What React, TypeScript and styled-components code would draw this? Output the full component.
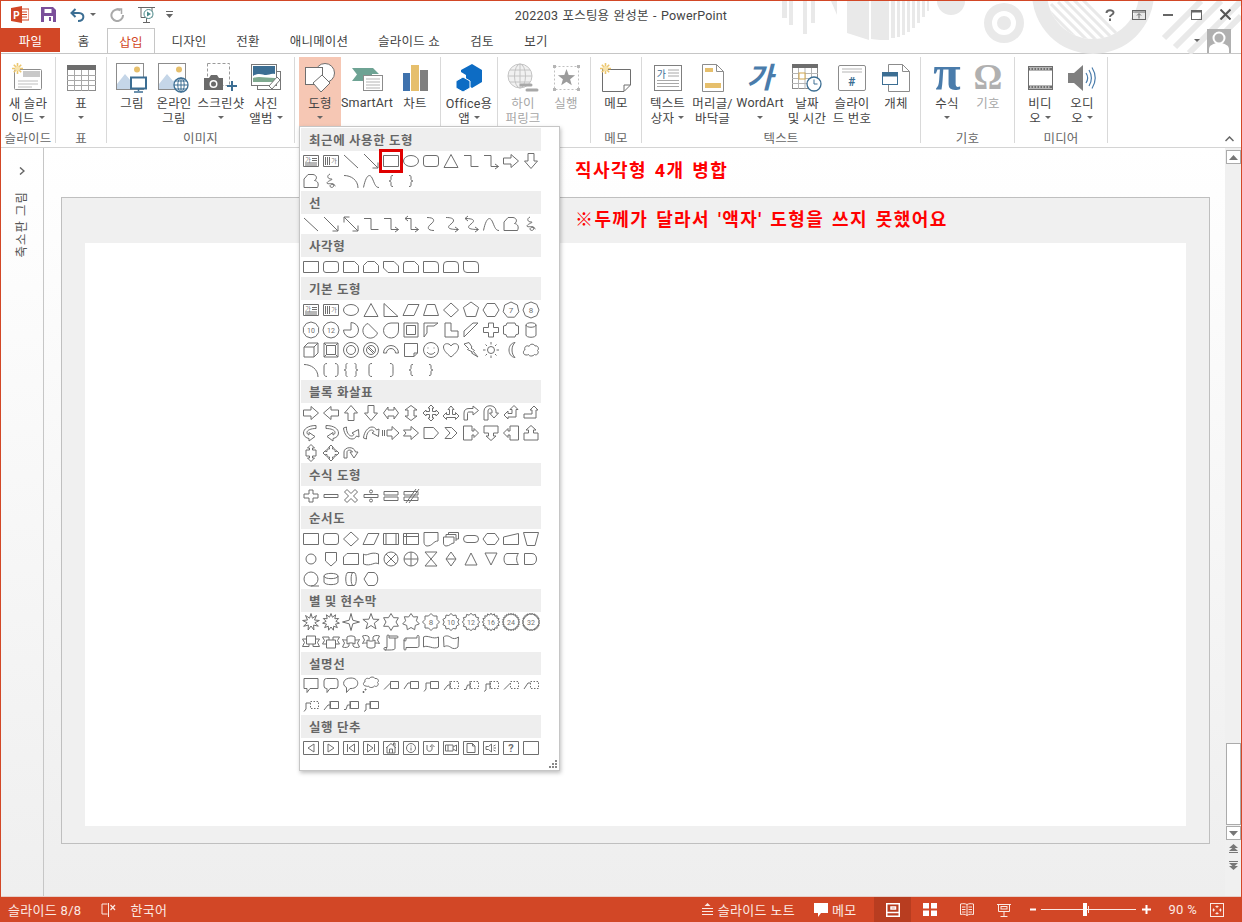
import React from "react";
import styled, {createGlobalStyle} from "styled-components";

const ACCENT = "#d24726";
const STROKE = "#6e6e6e";
const FONT = `Roboto, "Noto Sans CJK KR", sans-serif`;

const GlobalStyle = createGlobalStyle`
  html, body {
    margin: 0;
    padding: 0;
    background: #fff;
  }
  * {
    box-sizing: border-box;
  }
`

const Window = styled.div`
  position: relative;
  width: 1242px;
  height: 922px;
  display: flex;
  flex-direction: column;
  overflow: hidden;
  border: 1px solid ${ACCENT};
  border-bottom: 0;
  background: #fff;
  font-family: ${FONT};
  font-size: 12.5px;
  letter-spacing: 0.2px;
  color: #444;
`

const Header = styled.header`
  position: relative;
  height: 53px;
  flex: none;
  display: flex;
  flex-direction: column;
  border-bottom: 1px solid #c6c6c6;
`

const HeaderArt = styled.svg`
  position: absolute;
  right: 0;
  top: 0;
`

const TitleBar = styled.div`
  position: relative;
  height: 28px;
  display: grid;
  grid-template-columns: 1fr auto 1fr;
  align-items: center;
`

const QuickAccess = styled.div`
  display: flex;
  align-items: center;
  padding-left: 10px;
  gap: 5px;
`

const QuickSlot = styled.span<{$w: number; $gap?: number}>`
  width: ${p => p.$w}px;
  margin-left: ${p => p.$gap ?? 0}px;
  display: flex;
  justify-content: center;
`

const Title = styled.div`
  color: #444;
  word-spacing: 1px;
`

const WindowButtons = styled.div`
  display: flex;
  justify-content: flex-end;
  align-items: center;
  padding-right: 1px;
`

const WindowButton = styled.span`
  width: 29px;
  height: 20px;
  display: flex;
  align-items: center;
  justify-content: center;
`

const TabRow = styled.nav`
  position: relative;
  height: 25px;
  display: flex;
`

const Tab = styled.div<{$active?: boolean; $file?: boolean; $w: number}>`
  width: ${p => p.$w}px;
  height: ${p => (p.$active ? 25 : 24)}px;
  display: flex;
  align-items: center;
  justify-content: center;
  white-space: nowrap;
  color: ${p => (p.$file ? "#fff" : p.$active ? ACCENT : "#444")};
  background: ${p => (p.$file ? ACCENT : p.$active ? "#fff" : "transparent")};
  border: ${p => (p.$active ? "1px solid #c6c6c6" : "0")};
  border-bottom: 0;
  z-index: 1;
`

const Account = styled.div`
  margin-left: auto;
  display: flex;
  align-items: center;
  gap: 7px;
  padding-right: 10px;
`

const Ribbon = styled.section`
  height: 94px;
  flex: none;
  display: flex;
  align-items: flex-start;
  padding-top: 3px;
  border-bottom: 1px solid #d4d4d4;
  position: relative;
`

const Group = styled.div<{$w: number; $pad?: number}>`
  width: ${p => p.$w}px;
  height: 86px;
  flex: none;
  padding-left: ${p => p.$pad ?? 0}px;
  border-right: 1px solid #d9d9d9;
  display: flex;
  flex-direction: column;
`

const GroupButtons = styled.div`
  height: 69px;
  display: flex;
`

const GroupLabel = styled.div<{$pad?: number}>`
  margin-top: 5px;
  margin-left: ${p => -(p.$pad ?? 0)}px;
  line-height: 16px;
  text-align: center;
  color: #666;
  white-space: nowrap;
`

const ToolButton = styled.div<{$w: number; $active?: boolean; $off?: boolean}>`
  width: ${p => p.$w}px;
  height: 69px;
  flex: none;
  display: flex;
  flex-direction: column;
  align-items: center;
  padding-top: 3px;
  background: ${p => (p.$active ? "#f6c7b4" : "transparent")};
  color: ${p => (p.$off ? "#a6a6a6" : "#444")};
`

const ToolIcon = styled.div`
  height: 35px;
  display: flex;
  align-items: center;
  justify-content: center;
`

const GlyphIcon = styled.span<{$size: number; $color: string; $serif?: boolean; $lift: number}>`
  display: block;
  height: 32px;
  line-height: 32px;
  font-family: ${p => (p.$serif ? `"Liberation Serif", serif` : FONT)};
  font-size: ${p => p.$size}px;
  font-weight: 700;
  font-style: ${p => (p.$serif ? "normal" : "italic")};
  color: ${p => p.$color};
  transform: translateY(${p => -p.$lift}px);
`

const ToolLabel = styled.div`
  text-align: center;
  white-space: nowrap;
`

const LabelLine = styled.div`
  height: 15px;
  display: flex;
  align-items: center;
  justify-content: center;
  gap: 4px;
`

const Caret = styled.span<{$color?: string}>`
  display: inline-block;
  width: 0;
  height: 0;
  border-left: 3px solid transparent;
  border-right: 3px solid transparent;
  border-top: 3px solid ${p => p.$color ?? "#666"};
`

const Collapse = styled.svg`
  position: absolute;
  right: 7px;
  bottom: 5px;
`

const Body = styled.main`
  flex: 1;
  min-height: 0;
  display: flex;
  border-bottom: 1px solid #e6cfc9;
`

const ThumbRail = styled.aside`
  width: 43px;
  flex: none;
  display: flex;
  flex-direction: column;
  align-items: center;
  padding-top: 19px;
  gap: 16px;
  border-right: 1px solid #c6c6c6;
  background: linear-gradient(#fff, #efefef);
  color: #555;
`

const RailText = styled.div`
  writing-mode: vertical-rl;
  text-orientation: sideways;
  transform: rotate(180deg);
  letter-spacing: 1px;
  line-height: 14px;
`

const Canvas = styled.div`
  position: relative;
  flex: 1;
  padding: 49px 15px 0 17px;
  background: linear-gradient(#fff, #eee);
`

const Slide = styled.div`
  width: 1149px;
  height: 647px;
  padding: 45px 23px 17px;
  background: #f0f0f0;
  border: 1px solid #bfbfbf;
`

const SlideInner = styled.div`
  width: 100%;
  height: 100%;
  background: #fff;
`

const Annotation = styled.div<{$top: number}>`
  position: absolute;
  left: 531px;
  top: ${p => p.$top}px;
  color: #f00;
  font-weight: 700;
  font-size: 18px;
  line-height: 22px;
  letter-spacing: 1.4px;
  word-spacing: 2px;
  white-space: pre;
`

const ScrollBar = styled.div`
  width: 16px;
  flex: none;
  display: flex;
  flex-direction: column;
  align-items: center;
  padding-top: 2px;
  background: #f0f0f0;
`

const ScrollEnd = styled.div`
  width: 15px;
  height: 14px;
  flex: none;
  display: flex;
  align-items: center;
  justify-content: center;
  background: #fff;
  border: 1px solid #ababab;
`

const ScrollTrack = styled.div`
  flex: none;
  width: 15px;
  height: 579px;
`

const ScrollThumb = styled.div`
  flex: none;
  width: 15px;
  height: 82px;
  background: #fff;
  border: 1px solid #ababab;
  margin-bottom: 1px;
`

const PageJump = styled.svg<{$top: number}>`
  margin-top: ${p => p.$top}px;
  flex: none;
`

const StatusBar = styled.footer`
  height: 25px;
  flex: none;
  margin: 0 -1px;
  padding: 0 18px 0 8px;
  display: flex;
  align-items: center;
  background: ${ACCENT};
  color: #fbe9e3;
  font-size: 13px;
  letter-spacing: 0.3px;
`

const StatusText = styled.span<{$gap?: number}>`
  margin-left: ${p => p.$gap ?? 0}px;
  white-space: nowrap;
`

const StatusIcon = styled.svg<{$gap?: number}>`
  margin-left: ${p => p.$gap ?? 0}px;
  flex: none;
`

const StatusRight = styled.div`
  margin-left: auto;
  display: flex;
  align-items: center;
  height: 100%;
`

const ViewButton = styled.span<{$active?: boolean}>`
  width: 37px;
  height: 100%;
  display: flex;
  align-items: center;
  justify-content: center;
  background: ${p => (p.$active ? "#b83d20" : "transparent")};
`

const ViewGroup = styled.div`
  height: 100%;
  margin-left: 18px;
  display: flex;
`

const ZoomSlider = styled.div`
  position: relative;
  width: 95px;
  height: 1px;
  margin: 0 4px;
  background: #fbe9e3;
`

const ZoomThumb = styled.span`
  position: absolute;
  left: 42px;
  top: -6px;
  width: 4px;
  height: 13px;
  background: #fff;
`

const ZoomTick = styled.span`
  position: absolute;
  left: 47px;
  top: -3px;
  width: 1px;
  height: 7px;
  background: #fbe9e3;
`

const ZoomMinus = styled.svg`
  margin-left: 8px;
  flex: none;
`

const ZoomPlus = styled.svg`
  margin-left: 2px;
  flex: none;
`

const ShapeMenu = styled.div`
  position: absolute;
  left: 298px;
  top: 125px;
  z-index: 5;
  width: 261px;
  height: 645px;
  padding: 1px 0 0 1px;
  background: #fff;
  border: 1px solid #c6c6c6;
  box-shadow: 1px 2px 4px rgba(0, 0, 0, 0.25);
`

const MenuHeading = styled.div`
  width: 240px;
  height: 23px;
  padding-left: 8px;
  display: flex;
  align-items: center;
  background: #eeeeee;
  color: #666;
  font-weight: 700;
  letter-spacing: 0.6px;
`

const ShapeGrid = styled.div`
  display: grid;
  width: 240px;
  grid-template-columns: repeat(12, 20px);
  grid-auto-rows: 20px;
`

const ShapeCell = styled.span<{$selected?: boolean}>`
  width: 20px;
  height: 20px;
  display: block;
  outline: ${p => (p.$selected ? "3px solid #e00000" : "0")};
  outline-offset: -1px;
  z-index: ${p => (p.$selected ? 1 : 0)};
`

const ResizeGrip = styled.svg`
  position: absolute;
  right: 2px;
  bottom: 2px;
`

/* --- shape gallery --- */

interface ShapeDef {
  d: string
  dash?: string
  t?: string
  x?: number
  y?: number
  s?: number
}

function ring(n: number, R: number, r: number, cx = 10, cy = 10) {
  const pts: string[] = [];
  for (let i = 0; i < n * 2; i++) {
    const a = (Math.PI * i) / n - Math.PI / 2;
    const q = i % 2 ? r : R;
    pts.push(`${(cx + q * Math.cos(a)).toFixed(1)} ${(cy + q * Math.sin(a)).toFixed(1)}`);
  }
  return "M" + pts.join("L") + "Z";
}

function polygon(n: number, R: number, cx = 10, cy = 10) {
  const pts: string[] = [];
  for (let i = 0; i < n; i++) {
    const a = (2 * Math.PI * i) / n - Math.PI / 2;
    pts.push(`${(cx + R * Math.cos(a)).toFixed(1)} ${(cy + R * Math.sin(a)).toFixed(1)}`);
  }
  return "M" + pts.join("L") + "Z";
}

const circle = (cx: number, cy: number, r: number, ry = r) =>
  `M${cx - r} ${cy}a${r} ${ry} 0 1 0 ${r * 2} 0a${r} ${ry} 0 1 0 ${-r * 2} 0Z`;

const BOX = "M2.5 4.5H17.5V15.5H2.5Z";
const ACTION = "M2.5 3.5H17.5V16.5H2.5Z";
const head = "M17.5 15.5L14 13M17.5 15.5L14 18";
const tail = "M4 4.5L7 2M4 4.5L7 7";
const CUTBOX = "M9.5 6.5H17.5V13.5H9.5Z";

const SHAPES: Record<string, ShapeDef> = {
  textH: {d: BOX + "M11 7.5H16M11 9.5H16M4 12H16M4 14H16", t: "가", x: 7, y: 10.5, s: 6},
  textV: {d: BOX + "M4.5 6V14M6.5 6V14M8.5 6V14", t: "가", x: 13, y: 12, s: 6},
  line: {d: "M3 4L17 17"},
  arrow: {d: "M3 3L17 17M17 17V11.5M17 17H11.5"},
  dbl: {d: "M3 3L17 17M3 3H8.5M3 3V8.5M17 17V11.5M17 17H11.5"},
  rect: {d: BOX},
  oval: {d: circle(10, 10, 7.5, 5.5)},
  round: {d: "M5 4.5H15Q17.5 4.5 17.5 7V13Q17.5 15.5 15 15.5H5Q2.5 15.5 2.5 13V7Q2.5 4.5 5 4.5Z"},
  tri: {d: "M10 3.5L17 16.5H3Z"},
  elbow: {d: "M3 4.5H10V15.5H17.5"},
  elbowA: {d: "M3 4.5H10V15.5H17.5" + head},
  elbowD: {d: "M4 4.5H10V15.5H17.5" + head + tail},
  curveC: {d: "M6 3.5C14 3.5 14 7 10 10C6 13 6 16.5 13 16.5"},
  curveA: {d: "M5 3.5C14 3.5 14 7 10 10C6 13 6 15.5 17 15.5" + head},
  curveD: {d: "M4 4.5C14 4.5 14 7 10 10C6 13 6 15.5 17 15.5" + head + tail},
  curve: {d: "M2.5 16.5C5 4 9 1 12 9C14 14 15 16.5 18 16.5"},
  free: {d: "M3 16.5V8L7 3.5H12C16 4 16.5 8 13.5 9.5C17 10 18 13 16.5 16.5Z"},
  scrib: {d: "M9 3C5 5 7 8 10 8C14 8 6 10 6 12C6 14 13 11 13 14C13 17 9 17 9 15C9 13 13 13 14.5 15"},
  arc: {d: "M3 4.5C10 4.5 17 9 17 17"},
  lbrace: {d: "M12 4.5C9.5 4.5 10 5.500 10 7V8.500C10 9.500 9 10 8 10C9 10 10 10.500 10 11.500V13C10 14.500 9.500 15.500 12 15.500"},
  rbrace: {d: "M8 4.5C10.500 4.5 10 5.500 10 7V8.500C10 9.500 11 10 12 10C11 10 10 10.500 10 11.500V13C10 14.500 10.500 15.500 8 15.500"},
  right: {d: "M2.5 7H10V3.5L17.5 10L10 16.5V13H2.5Z"},
  left: {d: "M17.5 7H10V3.5L2.5 10L10 16.5V13H17.5Z"},
  up: {d: "M7 17.5V10H3.5L10 2.5L16.5 10H13V17.5Z"},
  down: {d: "M7 2.5V10H3.5L10 17.5L16.5 10H13V2.5Z"},
  snip1: {d: "M2.5 4.5H13.5L17.5 8.5V15.5H2.5Z"},
  snip2: {d: "M6.5 4.5H13.5L17.5 8.5V15.5H2.5V8.5Z"},
  snipd: {d: "M2.5 4.5H13L17.5 9V15.5H7L2.5 11Z"},
  snipr: {d: "M5 4.5H13.5L17.5 8.5V15.5H2.5V7Q2.5 4.5 5 4.5Z"},
  round1: {d: "M2.5 4.5H14Q17.5 4.5 17.5 8V15.5H2.5Z"},
  round2: {d: "M6 4.5H14Q17.5 4.5 17.5 8V15.5H2.5V8Q2.5 4.5 6 4.5Z"},
  round3: {d: "M2.5 4.5H14Q17.5 4.5 17.5 8V15.5H6Q2.5 15.5 2.5 12Z"},
  rtri: {d: "M3 3.5L17 16.5H3Z"},
  para: {d: "M7 4.5H18L13 15.5H2Z"},
  trap: {d: "M6 4.5H14L17.5 15.5H2.5Z"},
  diamond: {d: "M10 3L17.5 10L10 17L2.5 10Z"},
  penta: {d: polygon(5, 8)},
  hexa: {d: "M6 3.5H14L18 10L14 16.5H6L2 10Z"},
  hept: {d: polygon(7, 8), t: "7", s: 8, y: 13},
  octa: {d: polygon(8, 8), t: "8", s: 8, y: 13},
  deca: {d: polygon(10, 8), t: "10", s: 7, y: 12.5},
  dodeca: {d: polygon(12, 8), t: "12", s: 7, y: 12.5},
  pie: {d: "M10 10V2.5A7.5 7.5 0 1 1 2.5 10Z"},
  chord: {d: "M7 3.5A7.5 7.5 0 1 0 16.5 13Z"},
  tear: {d: "M10 3H17.5V10A7.5 7.5 0 1 1 10 3Z"},
  frame: {d: "M3 3H17V17H3ZM5.5 5.5H14.5V14.5H5.5Z"},
  half: {d: "M3 3H17L13 6H6V13L3 17Z"},
  ell: {d: "M4 3H10V11H17V17H4Z"},
  stripe: {d: "M3 11L12 3H17L3 17Z"},
  cross: {d: "M7.5 3H12.5V7.5H17.5V12.5H12.5V17H7.5V12.5H2.5V7.5H7.5Z"},
  plaque: {d: "M6 3H14Q14 6 17.5 6V14Q14 14 14 17H6Q6 14 2.5 14V6Q6 6 6 3Z"},
  can: {d: "M5 5C5 2 15 2 15 5V15C15 18 5 18 5 15ZM5 5C5 8 15 8 15 5"},
  cube: {d: "M3 7H13V17H3ZM3 7L7 3H17V13L13 17M13 7L17 3"},
  bevel: {d: "M3 3H17V17H3ZM5.5 5.5H14.5V14.5H5.5ZM3 3L5.5 5.5M17 3L14.5 5.5M3 17L5.5 14.5M17 17L14.5 14.5"},
  donut: {d: circle(10, 10, 7.5) + circle(10, 10, 4.5)},
  noSym: {d: circle(10, 10, 7.5) + circle(10, 10, 4.5) + "M6.5 7.5L12.5 13.5M7.5 6.5L13.5 12.5"},
  blockArc: {d: "M2.5 13A7.5 7.5 0 0 1 17.5 13H14.5A4.5 4.5 0 0 0 5.5 13Z"},
  fold: {d: "M3.5 3.5H16.5V13L13 16.5H3.5ZM16.5 13H13V16.5"},
  smile: {d: circle(10, 10, 7.5) + "M7 7.5V8.5M13 7.5V8.5M6 12C8 15 12 15 14 12"},
  heart: {d: "M10 17C5 13 2.5 10 2.5 7C2.5 3 8 2.5 10 6C12 2.5 17.5 3 17.5 7C17.5 10 15 13 10 17Z"},
  bolt: {d: "M3 4L8 2.5L11 7L10 8L13.5 10.5L12.5 11.5L17 17L10.5 13L11.5 12L6.5 9.5L7.5 8.5Z"},
  sun: {d: circle(10, 10, 3.5) + "M10 2V4.5M10 15.5V18M2 10H4.5M15.5 10H18M4.5 4.5L6 6M14 14L15.5 15.5M4.5 15.5L6 14M14 6L15.5 4.5"},
  moon: {d: "M14 2.5C6 3.5 6 16.5 14 17.5C10 14 10 6 14 2.5Z"},
  cloud: {d: "M5 15C1.5 15 2 10 4 10C2.5 6 7 5 8 6.5C9 3.5 13 3.5 14 6C17 5 18.5 9 16.5 10.5C18.5 12.5 16 16 13.5 14.5C12 16.5 8 16.5 7.5 14.5C7 15 6 15 5 15Z"},
  brack2: {d: "M6 3.5C3.5 3.5 3 5 3 7V13C3 15 3.5 16.5 6 16.5M14 3.5C16.5 3.5 17 5 17 7V13C17 15 16.5 16.5 14 16.5"},
  brace2: {d: "M6.500 3.500C4.500 3.500 5 5 5 7V8.500C5 9.500 4 10 3 10C4 10 5 10.500 5 11.500V13C5 15 4.500 16.500 6.500 16.500M13.500 3.500C15.500 3.500 15 5 15 7V8.500C15 9.500 16 10 17 10C16 10 15 10.500 15 11.500V13C15 15 15.500 16.500 13.500 16.500"},
  lbrack: {d: "M11 3.5C8 3.5 8 5 8 7V13C8 15 8 16.5 11 16.5"},
  rbrack: {d: "M9 3.5C12 3.5 12 5 12 7V13C12 15 12 16.5 9 16.5"},
  lr: {d: "M2.5 10L7 4V7H13V4L17.5 10L13 16V13H7V16Z"},
  ud: {d: "M10 2.5L16 7H13V13H16L10 17.5L4 13H7V7H4Z"},
  quad: {d: "M10 2L13 5H11.5V8.5H15V7L18 10L15 13V11.5H11.5V15H13L10 18L7 15H8.5V11.5H5V13L2 10L5 7V8.5H8.5V5H7Z"},
  lrup: {d: "M10 3L13 6.5H11.5V11.5H14.5V9.5L18 13L14.5 16.5V14.5H5.5V16.5L2 13L5.5 9.5V11.5H8.5V6.5H7Z"},
  bent: {d: "M3 17V10C3 7 5 5.5 8 5.5H12V3L17.5 7.5L12 12V9H8C7 9 6.5 9.5 6.5 10.5V17Z"},
  uturn: {d: "M3 17V8C3 1 15 1 15 8V10H17.5L13 15L8.5 10H11V8C11 5 7 5 7 8V17Z"},
  leftUp: {d: "M3 12L7 8V10.5H11V6.5H9L13 2.5L17 6.5H15V14H7V16Z"},
  bentUp: {d: "M3 11H11V7H9L13 3L17 7H15V15H3Z"},
  cRight: {d: "M15 2.500C7 2.500 2.500 6 2.500 10C2.500 13 5 15 8 15.500V18L14 13.500L8 9.500V12C6.500 11.500 6 10.500 6 9.500C6 7 10 5.500 15 5.500Z"},
  cLeft: {d: "M5 2.500C13 2.500 17.500 6 17.500 10C17.500 13 15 15 12 15.500V18L6 13.500L12 9.500V12C13.500 11.500 14 10.500 14 9.500C14 7 10 5.500 5 5.500Z"},
  cUp: {d: "M2.500 5C3 11 7 16 11 16C13 16 14.500 15 15.500 13L18 14L17.500 6.500L11 10L13 11.500C12.500 12.500 11.500 13 10.500 13C8 13 5 9 5.500 4Z"},
  cDown: {d: "M2.500 15C3 9 7 4 11 4C13 4 14.500 5 15.500 7L18 6L17.500 13.500L11 10L13 8.500C12.500 7.500 11.500 7 10.500 7C8 7 5 11 5.500 16Z"},
  striped: {d: "M1.5 7V13M3.5 7V13M6 7H11V3.5L18 10L11 16.5V13H6Z"},
  notched: {d: "M2.5 7H10V3.5L17.5 10L10 16.5V13H2.5L5 10Z"},
  home: {d: "M3 4.5H12.5L17.5 10L12.5 15.5H3Z"},
  chevron: {d: "M4 4.5H10.5L16 10L10.5 15.5H4L9 10Z"},
  rCall: {d: "M2.5 3H11V8H13V5.5L17.5 10L13 14.5V12H11V17H2.5Z"},
  dCall: {d: "M3 3H17V10H12.5V13H15L10 17.5L5 13H7.5V10H3Z"},
  lCall: {d: "M17.5 3H9V8H7V5.5L2.5 10L7 14.5V12H9V17H17.5Z"},
  uCall: {d: "M3 17H17V10H12.5V7H15L10 2.5L5 7H7.5V10H3Z"},
  udCall: {d: "M10 1.5L13.5 5H11.5V7H15V13H11.5V15H13.5L10 18.5L6.5 15H8.5V13H5V7H8.5V5H6.5Z"},
  qCall: {d: "M10 2L12.5 4.5H11.5V6H14V8.5H15.5V7.5L18 10L15.5 12.5V11.5H14V14H11.5V15.5H12.5L10 18L7.5 15.5H8.5V14H6V11.5H4.5V12.5L2 10L4.5 7.5V8.5H6V6H8.5V4.5H7.5Z"},
  circ: {d: "M3 15V9C3 4 13 2.5 14.5 9H17L13 15L9 9H11.5C10 6 6 7 6 9V15Z"},
  plus: {d: "M8 4H12V8H17V12H12V16H8V12H3V8H8Z"},
  minus: {d: "M3 8.5H17V11.5H3Z"},
  times: {d: "M6 3.5L10 7.5L14 3.5L16.5 6L12.5 10L16.5 14L14 16.5L10 12.5L6 16.5L3.5 14L7.5 10L3.5 6Z"},
  divide: {d: "M3 8.5H17V11.5H3Z" + circle(10, 5.5, 1.5) + circle(10, 14.5, 1.5)},
  equal: {d: "M3 5.5H17V9H3ZM3 11H17V14.5H3Z"},
  notEq: {d: "M3 5.5H17V9H3ZM3 11H17V14.5H3ZM5 17L15 3M8 17L18 3"},
  predef: {d: BOX + "M5 4.5V15.5M15 4.5V15.5"},
  internal: {d: BOX + "M5.5 4.5V15.5M2.5 7.5H17.5"},
  doc: {d: "M3 3.5H17V12C12 12 12 17 6 17C4 17 3 15 3 13Z"},
  multidoc: {d: "M2.5 8H13V14C10 14 9 17 5 17C3 17 2.5 15 2.5 14ZM5 8V5.5H15V12M7.5 5.5V3.5H17.5V10H15"},
  termin: {d: "M6 6.5H14A3.5 3.5 0 0 1 14 13.5H6A3.5 3.5 0 0 1 6 6.5Z"},
  prep: {d: "M6 4.5H14L18 10L14 15.5H6L2 10Z"},
  manIn: {d: "M2.5 8L17.5 4.5V15.5H2.5Z"},
  manOp: {d: "M2.5 3.5H17.5L14 16.5H6Z"},
  conn: {d: circle(10, 10, 5)},
  offp: {d: "M4.5 3.5H15.5V12L10 17L4.5 12Z"},
  card: {d: "M6 4.5H17.5V15.5H2.5V8Z"},
  tape: {d: "M2.5 5C6 8 9 2 17.5 5V15C14 12 10 18 2.5 15Z"},
  sumJ: {d: circle(10, 10, 7) + "M5 5L15 15M15 5L5 15"},
  orJ: {d: circle(10, 10, 7) + "M3 10H17M10 3V17"},
  collate: {d: "M4 3H16L4 17H16Z"},
  sort: {d: "M10 3L15 10L10 17L5 10ZM5 10H15"},
  extract: {d: "M10 4L16 16H4Z"},
  merge: {d: "M4 4H16L10 16Z"},
  stored: {d: "M6 4.5H17.5C15 7 15 13 17.5 15.5H6C2 15 2 5 6 4.5Z"},
  delay: {d: "M3.5 4.5H11C17 4.5 17 15.5 11 15.5H3.5Z"},
  seq: {d: circle(10, 10, 7) + "M10 17H18"},
  disk: {d: "M3 7C3 3.5 17 3.5 17 7V13C17 16.5 3 16.5 3 13ZM3 7C3 10.5 17 10.5 17 7"},
  drum: {d: "M7 3.5H13C16 3.5 16 16.5 13 16.5H7C4 16.5 4 3.5 7 3.5ZM12 3.5C9.5 3.5 9.5 16.5 12 16.5"},
  display: {d: "M7 3.5H13C18 5 18 15 13 16.5H7L3 10Z"},
  boom1: {d: ring(9, 8.5, 4)},
  boom2: {d: ring(11, 8.5, 5)},
  star4: {d: ring(4, 8.5, 2.5)},
  star5: {d: ring(5, 8.5, 3.5)},
  star6: {d: ring(6, 8.5, 5)},
  star7: {d: ring(7, 8.5, 5.5)},
  star8: {d: ring(8, 8.5, 6.5), t: "8", s: 8, y: 13},
  star10: {d: ring(10, 8.5, 6.8), t: "10", s: 7, y: 12.5},
  star12: {d: ring(12, 8.8, 7), t: "12", s: 7, y: 12.5},
  star16: {d: ring(16, 8.8, 7), t: "16", s: 7, y: 12.5},
  star24: {d: ring(24, 8.8, 7.2), t: "24", s: 7, y: 12.5},
  star32: {d: ring(32, 8.8, 7.4), t: "32", s: 7, y: 12.5},
  ribUp: {d: "M5.5 4H14.5V12H5.5ZM5.5 7H1.5L3.5 10.5L1.5 14.5H8V12M14.5 7H18.5L16.5 10.5L18.5 14.5H12V12"},
  ribDn: {d: "M5.5 8H14.5V16H5.5ZM5.5 12H1.5L3.5 8.5L1.5 5H8V8M14.5 12H18.5L16.5 8.5L18.5 5H12V8"},
  cRibUp: {d: "M6 5C8 3.5 12 3.5 14 5V12C12 10.5 8 10.5 6 12ZM6 8C4 8 3 8 1.5 7.5L3.5 11L1.5 15C4 16 7 15.5 8 14V11M14 8C16 8 17 8 18.5 7.5L16.5 11L18.5 15C16 16 13 15.5 12 14V11"},
  cRibDn: {d: "M6 8C8 9.5 12 9.5 14 8V15C12 16.5 8 16.5 6 15ZM6 11C4 11 3 11 1.5 11.5L3.5 8L1.5 4C4 3 7 3.5 8 5V8.5M14 11C16 11 17 11 18.5 11.5L16.5 8L18.5 4C16 3 13 3.5 12 5V8.5"},
  vScroll: {d: "M6 4C6 2.5 8 2.5 8 4H16C17.5 4 17.5 6 16 6H14V16C14 18 12 18 4 18C2.5 18 2.5 15.5 4 15.5H6ZM4 15.5C6 15.5 6 18 4 18M8 4V6H14"},
  hScroll: {d: "M3 8C3 6 5 6 5 6H16V4.5C16 3 18 3 18 4.5V14C18 15.5 16 15.5 16 15.5H5V17C5 18.5 3 18.5 3 17ZM3 8C3 9.5 5 9.5 5 8V6"},
  wave: {d: "M2.5 5C7 2.5 12 8 17.5 5V15C12 18 7 12.5 2.5 15Z"},
  wave2: {d: "M2.5 5C5 3 8 4 10 5.5C12 7 15 7 17.5 5L17 15C15 17 12 17 10 15.5C8 14 5 13 3 15Z"},
  cRect: {d: "M3 3.5H17V13.5H9L6 17.5V13.5H3Z"},
  cRound: {d: "M5.5 3.5H14.5Q17 3.5 17 6V11Q17 13.5 14.5 13.5H9L6 17.5V13.5H5.5Q3 13.5 3 11V6Q3 3.5 5.5 3.5Z"},
  cOval: {d: "M10 3C19 3 19 13.5 10 13.5H9L5.5 17.5V12.5C0.5 10 2 3 10 3Z"},
  cCloud: {d: "M5 11C1.5 11 2 7 4 7C3 3.5 7 2.5 8 4C9 1.5 13 1.5 14 3.5C17 3 18.5 6 16.5 7.5C18.5 9.5 16 12.5 13.5 11C12 13 8 13 7.5 11C7 11.5 6 11.5 5 11ZM4 14H5V15H4ZM2 16.5H3V17.5H2Z"},
  l1: {d: CUTBOX + "M9.5 8L3 14.5"},
  l2: {d: CUTBOX + "M9.5 8H7L3 14"},
  l3: {d: CUTBOX + "M9.5 8H5V14L3 16.5"},
  a1: {d: "M9 6V14M9 10H7L3 15", dash: CUTBOX},
  a2: {d: "M9 6V14M9 10H6.5L5 14.5H3", dash: CUTBOX},
  a3: {d: "M9 6V14M9 9H5V15L3 16.5", dash: CUTBOX},
  n1: {d: "M9.5 8L3 14.5", dash: CUTBOX},
  n2: {d: "M9.5 8H7L3 14", dash: CUTBOX},
  n3: {d: "M9.5 8H5V14L3 16.5", dash: CUTBOX},
  b1: {d: CUTBOX + "M9 6V14M9 10H7L3 15"},
  b2: {d: CUTBOX + "M9 6V14M9 10H6.5L5 14.5H3"},
  b3: {d: CUTBOX + "M9 6V14M9 9H5V15L3 16.5"},
  aBack: {d: ACTION + "M13 6V14L7 10Z"},
  aFwd: {d: ACTION + "M7 6V14L13 10Z"},
  aBegin: {d: ACTION + "M6.5 6V14M13.5 6V14L8 10Z"},
  aEnd: {d: ACTION + "M13.5 6V14M6.5 6V14L12 10Z"},
  aHome: {d: ACTION + "M5 10L10 5.5L15 10M6 9V15H14V9M8.5 15V11H11.5V15M12.5 7V5H14V8.5"},
  aInfo: {d: ACTION + circle(10, 10, 4.5) + "M10 7.5V8.5M10 9.5V12.5"},
  aRet: {d: ACTION + "M6 7V11C6 14 11 14 11 11V8M9 9L11 6.5L13.5 9"},
  aMovie: {d: ACTION + "M4.5 7H12V13H4.5ZM12 9L15.5 7V13L12 11M7 7V13"},
  aDoc: {d: ACTION + "M6 5.5H11.5L14 8V14.5H6ZM11.5 5.5V8H14"},
  aSound: {d: ACTION + "M5 8.5H7.5L10.5 6V14L7.5 11.5H5ZM12.5 8L14.5 7M12.5 10H15M12.5 12L14.5 13"},
  aHelp: {d: ACTION, t: "?", s: 11, y: 14},
  aBlank: {d: ACTION},
};

const SVG_STROKE = {fill: "none", stroke: STROKE, strokeWidth: 1};

function ShapeIcon(props: {name: string}) {
  const def = SHAPES[props.name];

  return (
    <svg width="20" height="20" viewBox="0 0 20 20" style={{display: "block"}}>
      <path d={def.d} {...SVG_STROKE} />
      {def.dash && <path d={def.dash} {...SVG_STROKE} strokeDasharray="1.500 1.500" />}
      {def.t && (
        <text
          x={def.x ?? 10}
          y={def.y ?? 12.5}
          textAnchor="middle"
          fontSize={def.s ?? 6}
          fontWeight={def.t === "?" ? 700 : 400}
          fontFamily={FONT}
          letterSpacing="0"
          fill={STROKE}
        >
          {def.t}
        </text>
      )}
    </svg>
  )
}

const MENU: {title: string; items: string}[] = [
  {title: "최근에 사용한 도형", items: "textH textV line arrow rect oval round tri elbow elbowA right down free scrib arc curve lbrace rbrace"},
  {title: "선", items: "line arrow dbl elbow elbowA elbowD curveC curveA curveD curve free scrib"},
  {title: "사각형", items: "rect round snip1 snip2 snipd snipr round1 round2 round3"},
  {title: "기본 도형", items: "textH textV oval tri rtri para trap diamond penta hexa hept octa deca dodeca pie chord tear frame half ell stripe cross plaque can cube bevel donut noSym blockArc fold smile heart bolt sun moon cloud arc brack2 brace2 lbrack rbrack lbrace rbrace"},
  {title: "블록 화살표", items: "right left up down lr ud quad lrup bent uturn leftUp bentUp cRight cLeft cUp cDown striped notched home chevron rCall dCall lCall uCall udCall qCall circ"},
  {title: "수식 도형", items: "plus minus times divide equal notEq"},
  {title: "순서도", items: "rect round diamond para predef internal doc multidoc termin prep manIn manOp conn offp card tape sumJ orJ collate sort extract merge stored delay seq disk drum display"},
  {title: "별 및 현수막", items: "boom1 boom2 star4 star5 star6 star7 star8 star10 star12 star16 star24 star32 ribUp ribDn cRibUp cRibDn vScroll hScroll wave wave2"},
  {title: "설명선", items: "cRect cRound cOval cCloud l1 l2 l3 a1 a2 a3 n1 n2 n3 b1 b2 b3"},
  {title: "실행 단추", items: "aBack aFwd aBegin aEnd aHome aInfo aRet aMovie aDoc aSound aHelp aBlank"},
];

/* --- ribbon icons --- */

const Sparkle = (props: {x: number; y: number}) => (
  <g transform={`translate(${props.x} ${props.y})`} stroke="#ecc66e" strokeWidth="1.6">
    <path d="M5.500 0V11M0 5.500H11M1.800 1.800L9.200 9.200M9.200 1.800L1.800 9.200" />
    <circle cx="5.500" cy="5.500" r="2.500" fill="#f7e3ad" stroke="none" />
  </g>
);

const Picture = () => (
  <>
    <rect x=".5" y=".5" width="27" height="26" fill="#fff" stroke="#8c8c8c" />
    <path d="M1 26V21L9 11L15 18L18 16L26 26Z" fill="#c5d6e8" />
    <circle cx="21" cy="6.500" r="3" fill="#e6bf6c" />
  </>
);

const Icons: Record<string, React.ReactNode> = {
  newSlide: (
    <svg width="32" height="30" viewBox="0 0 32 30">
      <rect x="2.500" y="6.500" width="27" height="20" rx="1" fill="#fff" stroke="#8c8c8c" />
      <rect x="11" y="8" width="17" height="6" fill="#c9c9c9" />
      <path d="M6 18H26M6 21H26M6 24H20" stroke="#bdbdbd" />
      <Sparkle x={0} y={0} />
    </svg>
  ),
  table: (
    <svg width="29" height="26" viewBox="0 0 29 26">
      <rect x=".5" y=".5" width="28" height="25" fill="#fff" stroke="#8c8c8c" />
      <rect width="29" height="5" fill="#6d6d6d" />
      <path d="M0 10.500H29M0 15.500H29M0 20.500H29M7.500 5V26M14.500 5V26M21.500 5V26" stroke="#a8a8a8" />
    </svg>
  ),
  picture: (
    <svg width="32" height="30" viewBox="0 0 32 30">
      <Picture />
      <rect x="15" y="14.500" width="15" height="11" fill="#fff" stroke="#3c6e93" strokeWidth="2" />
      <path d="M22.500 25.500V28M18 29H27" stroke="#3c6e93" strokeWidth="1.500" />
    </svg>
  ),
  online: (
    <svg width="32" height="30" viewBox="0 0 32 30">
      <Picture />
      <circle cx="23" cy="22" r="7" fill="#fff" stroke="#3c6e93" strokeWidth="1.300" />
      <path d="M16 22H30M23 15V29M17.500 18H28.500M17.500 26H28.500" stroke="#3c6e93" />
      <ellipse cx="23" cy="22" rx="3.200" ry="7" fill="none" stroke="#3c6e93" />
    </svg>
  ),
  screenshot: (
    <svg width="34" height="30" viewBox="0 0 34 30">
      <rect x="3.500" y=".5" width="22" height="22" fill="#fff" stroke="#9a9a9a" strokeDasharray="3 2" />
      <path d="M0 15H5L7 12H13L15 15H19V27H0Z" fill="#6b6b6b" />
      <circle cx="9.500" cy="21" r="4" fill="#fff" />
      <circle cx="9.500" cy="21" r="2.500" fill="#6b6b6b" />
      <path d="M28 18V28M23 23H33" stroke="#3c6e93" strokeWidth="2" />
    </svg>
  ),
  album: (
    <svg width="31" height="27" viewBox="0 0 31 27">
      <rect x="6.500" y="7.500" width="23" height="18" fill="#fff" stroke="#777" />
      <rect x=".5" y=".5" width="25" height="21" fill="#fff" stroke="#777" />
      <rect x="2" y="2" width="22" height="10" fill="#3c6e93" />
      <path d="M2 18V12C8 8 12 11 15 11C18 11 20 9 24 10V14H2Z" fill="#fff" />
      <path d="M2 18V14C8 12 14 14 24 14V18Z" fill="#7ea98f" />
      <path d="M18 22L26 13L29 16L21 25Z" fill="#fff" stroke="#777" />
    </svg>
  ),
  shapes: (
    <svg width="30" height="30" viewBox="0 0 30 30" fill="#fff" stroke="#6e6e6e">
      <circle cx="20" cy="10" r="9.500" />
      <rect x=".5" y="4.500" width="17" height="17" />
      <path d="M17 12L25 20L16 29L8 20Z" />
    </svg>
  ),
  smartArt: (
    <svg width="31" height="26" viewBox="0 0 31 26">
      <path d="M0 3H21L27 9H20V16H0L5 9.500Z" fill="#6ea394" />
      <rect x="11.500" y="10.500" width="19" height="15" fill="#fff" stroke="#8c8c8c" />
      <path d="M14 14H28M14 17H28M14 20H28M14 23H28" stroke="#b3b3b3" />
    </svg>
  ),
  chart: (
    <svg width="25" height="26" viewBox="0 0 25 26">
      <rect y="8" width="7" height="18" fill="#3f72ad" />
      <rect x="8" width="8" height="26" fill="#e6bf6c" />
      <rect x="17" y="5" width="8" height="21" fill="#7f7f7f" />
    </svg>
  ),
  office: (
    <svg width="28" height="28" viewBox="0 0 28 28" fill="#0d6cc4">
      <path d="M17 0L27 6V18L17 24L11 20V11L6 8V6Z" />
      <path d="M8 13L15 17V24L8 28L1 24V17Z" stroke="#fff" />
    </svg>
  ),
  hyperlink: (
    <svg width="32" height="30" viewBox="0 0 32 30" fill="none" stroke="#c4c4c4">
      <circle cx="13" cy="13" r="12" fill="#f1f1f1" />
      <ellipse cx="13" cy="13" rx="5.500" ry="12" />
      <path d="M1 13H25M3 7H23M3 19H23M13 1V25" />
      <path d="M14 22H24M20 27H30" stroke="#a8a8a8" strokeWidth="3" strokeLinecap="round" />
    </svg>
  ),
  action: (
    <svg width="27" height="26" viewBox="0 0 27 26">
      <rect x="1.500" y="1.500" width="24" height="23" fill="#fff" stroke="#c0c0c0" strokeDasharray="2 2" />
      <rect width="3" height="3" fill="#b5b5b5" />
      <rect x="24" width="3" height="3" fill="#b5b5b5" />
      <rect y="23" width="3" height="3" fill="#b5b5b5" />
      <rect x="24" y="23" width="3" height="3" fill="#b5b5b5" />
      <path d={ring(5, 9, 3.800, 13.500, 13)} fill="#9c9c9c" />
    </svg>
  ),
  memo: (
    <svg width="32" height="30" viewBox="0 0 32 30">
      <path d="M2.500 6.500H30.500V22L24 28.500H2.500Z" fill="#fff" stroke="#6e6e6e" />
      <path d="M30 22H24V28" fill="none" stroke="#6e6e6e" />
      <Sparkle x={0} y={0} />
    </svg>
  ),
  textBox: (
    <svg width="28" height="26" viewBox="0 0 28 26">
      <rect x=".5" y=".5" width="27" height="25" fill="#fff" stroke="#7f7f7f" />
      <text x="7.500" y="13" textAnchor="middle" fontSize="10" fill="#3c6e93" fontFamily={FONT}>가</text>
      <path d="M14 5H25M14 8H25M14 11H25M3 15.500H25M3 18.500H25M3 21.500H25" stroke="#a8a8a8" />
    </svg>
  ),
  header: (
    <svg width="22" height="28" viewBox="0 0 22 28">
      <path d="M.5.5H14.500L21.500 7.500V27.500H.5Z" fill="#fff" stroke="#8c8c8c" />
      <path d="M14.500.5V7.500H21.500" fill="none" stroke="#8c8c8c" />
      <rect x="3" y="4" width="8" height="4" fill="#e6bf6c" />
      <rect x="3" y="19" width="16" height="5" fill="#e6bf6c" />
    </svg>
  ),
  wordArt: <GlyphIcon $size={29} $color="#4a7cab" $lift={0}>가</GlyphIcon>,
  date: (
    <svg width="30" height="28" viewBox="0 0 30 28">
      <rect x=".5" y=".5" width="25" height="24" fill="#fff" stroke="#8c8c8c" />
      <rect width="26" height="4" fill="#6d6d6d" />
      <path d="M0 9.500H26M0 14.500H26M0 19.500H26M6.500 4V25M13 4V25M19.500 4V25" stroke="#b5b5b5" />
      <rect x="7" y="9" width="6" height="6" fill="#fff" stroke="#d1a54a" />
      <circle cx="22" cy="20" r="7" fill="#fff" stroke="#3c6e93" strokeWidth="1.300" />
      <path d="M22 15.500V20H25.500" fill="none" stroke="#3c6e93" />
    </svg>
  ),
  slideNo: (
    <svg width="28" height="26" viewBox="0 0 28 26">
      <rect x=".5" y=".5" width="27" height="25" rx="1.500" fill="#fff" stroke="#8c8c8c" />
      <path d="M4 4H24M4 7H24" stroke="#b5b5b5" />
      <text x="14" y="21" textAnchor="middle" fontSize="12" fontWeight="700" fill="#3c6e93" fontFamily={FONT}>#</text>
    </svg>
  ),
  object: (
    <svg width="28" height="28" viewBox="0 0 28 28">
      <path d="M6.500.5H20.500L27.500 7.500V27.500H6.500Z" fill="#fff" stroke="#8c8c8c" />
      <path d="M20.500.5V7.500H27.500" fill="none" stroke="#8c8c8c" />
      <rect x=".5" y="8.500" width="15" height="12" fill="#fff" stroke="#3c6e93" />
      <rect x="1" y="9" width="14" height="3.500" fill="#3c6e93" />
    </svg>
  ),
  pi: <GlyphIcon $size={50} $color="#4a7cab" $serif $lift={5}>π</GlyphIcon>,
  omega: <GlyphIcon $size={36} $color="#b0b0b0" $serif $lift={1}>Ω</GlyphIcon>,
  video: (
    <svg width="25" height="24" viewBox="0 0 25 24">
      <rect x=".5" y=".5" width="24" height="23" fill="#fff" stroke="#6e6e6e" />
      <path d="M0 3H25M0 21H25" stroke="#6e6e6e" strokeWidth="3" />
      <path d="M2 3H23M2 21H23" stroke="#fff" strokeWidth="1" strokeDasharray="1.500 1.500" />
    </svg>
  ),
  audio: (
    <svg width="28" height="28" viewBox="0 0 28 28">
      <path d="M0 9H6L15 1V27L6 19H0Z" fill="#7f7f7f" />
      <path d="M18 9C20 12 20 16 18 19M21 6C24 11 24 17 21 22M24 3.500C28 10 28 18 24 24.500" fill="none" stroke="#4a7cab" strokeWidth="1.200" />
    </svg>
  ),
};

interface ToolDef {
  icon: string
  label: string[]
  w: number
  caret?: boolean
  off?: boolean
  active?: boolean
}

interface GroupDef {
  name: string
  w: number
  pad?: number
  tools: ToolDef[]
}

const GROUPS: GroupDef[] = [
  {name: "슬라이드", w: 55, pad: 1, tools: [{icon: "newSlide", label: ["새 슬라", "이드"], w: 52, caret: true}]},
  {name: "표", w: 51, tools: [{icon: "table", label: ["표"], w: 50, caret: true}]},
  {name: "이미지", w: 188, pad: 4, tools: [
    {icon: "picture", label: ["그림"], w: 42},
    {icon: "online", label: ["온라인", "그림"], w: 42},
    {icon: "screenshot", label: ["스크린샷"], w: 52, caret: true},
    {icon: "album", label: ["사진", "앨범"], w: 38, caret: true},
  ]},
  {name: "", w: 146, pad: 4, tools: [
    {icon: "shapes", label: ["도형"], w: 42, caret: true, active: true},
    {icon: "smartArt", label: ["SmartArt"], w: 52},
    {icon: "chart", label: ["차트"], w: 44},
  ]},
  {name: "", w: 57, tools: [{icon: "office", label: ["Office용", "앱"], w: 56, caret: true}]},
  {name: "", w: 93, pad: 2, tools: [
    {icon: "hyperlink", label: ["하이", "퍼링크"], w: 46, off: true},
    {icon: "action", label: ["실행"], w: 40, off: true},
  ]},
  {name: "메모", w: 51, tools: [{icon: "memo", label: ["메모"], w: 50}]},
  {name: "텍스트", w: 279, pad: 3, tools: [
    {icon: "textBox", label: ["텍스트", "상자"], w: 45, caret: true},
    {icon: "header", label: ["머리글/", "바닥글"], w: 45},
    {icon: "wordArt", label: ["WordArt"], w: 50, caret: true},
    {icon: "date", label: ["날짜", "및 시간"], w: 44},
    {icon: "slideNo", label: ["슬라이", "드 번호"], w: 46},
    {icon: "object", label: ["개체"], w: 42},
  ]},
  {name: "기호", w: 94, pad: 5, tools: [
    {icon: "pi", label: ["수식"], w: 42, caret: true},
    {icon: "omega", label: ["기호"], w: 40, off: true},
  ]},
  {name: "미디어", w: 93, pad: 4, tools: [
    {icon: "video", label: ["비디", "오"], w: 42, caret: true},
    {icon: "audio", label: ["오디", "오"], w: 42, caret: true},
  ]},
];

const TABS = [
  {label: "파일", w: 59, file: true},
  {label: "홈", w: 47},
  {label: "삽입", w: 48, active: true},
  {label: "디자인", w: 68},
  {label: "전환", w: 50},
  {label: "애니메이션", w: 92},
  {label: "슬라이드 쇼", w: 88},
  {label: "검토", w: 58},
  {label: "보기", w: 50},
];

function Tool(props: ToolDef) {
  const {icon, label, w, caret, off, active} = props;
  const lines = caret && label.length === 1 ? [...label, ""] : label;

  return (
    <ToolButton $w={w} $off={off} $active={active}>
      <ToolIcon>{Icons[icon]}</ToolIcon>
      <ToolLabel>
        {lines.map((line, i) => (
          <LabelLine key={i}>
            {line}
            {caret && i === lines.length - 1 && <Caret />}
          </LabelLine>
        ))}
      </ToolLabel>
    </ToolButton>
  )
}

function TitleArt() {
  return (
    <HeaderArt width="472" height="53" viewBox="770 0 472 53" fill="#e9e9e9">
      <defs>
        <clipPath id="ringInside">
          <circle cx="1094" cy="-8" r="46" />
        </clipPath>
      </defs>
      <path d="M783 0H788V17H783ZM790 0H794V24H790ZM804 0H808V33H804ZM812 0H816V22H812ZM832 0H838V14Z" />
      <path d="M848 0H870V39L848 32Z" />
      <path d="M872 0H890V39C884 39 878 39 872 38ZM892 0H896V37H892ZM898 0H901V36H898ZM903 0H906V34H903ZM908 0H911V31H908ZM913 0H916V27H913ZM918 0H921V22H918ZM923 0H926V16H923ZM928 0H930V10H928Z" />
      <path d="M938 0H966A14 14 0 0 1 938 0Z" />
      <path fillRule="evenodd" d="M985 22a20 20 0 1 0 40 0a20 20 0 1 0 -40 0ZM993 22a12 12 0 1 1 24 0a12 12 0 1 1 -24 0Z" />
      <circle cx="1005" cy="22" r="7" />
      <path fillRule="evenodd" d="M1033 -8a61 61 0 1 0 122 0a61 61 0 1 0 -122 0ZM1048 -8a46 46 0 1 1 92 0a46 46 0 1 1 -92 0Z" />
      <g clipPath="url(#ringInside)" stroke="#e9e9e9" strokeWidth="3">
        <path d="M1045 5L1095 55M1052 3L1102 53M1059 1L1109 51M1066 -1L1116 49M1073 -3L1123 47M1080 -5L1130 45" />
      </g>
      <g stroke="#e9e9e9" strokeWidth="6">
        <path d="M1202 0L1165 37M1222 0L1176 46M1242 0L1190 52M1242 15L1210 47" />
      </g>
    </HeaderArt>
  )
}

export default function App() {
  return (
    <Window>
      <GlobalStyle />
      <Header>
        <TitleArt />
        <TitleBar>
          <QuickAccess>
            <QuickSlot $w={18}>
              <svg width="18" height="17" viewBox="0 0 18 17">
                <rect x="8" y="3" width="10" height="11" fill="#fff" stroke="#d24726" />
                <path d="M10 6H16M10 8.500H16M10 11H16" stroke="#d24726" />
                <path d="M0 2L11 0V17L0 15Z" fill="#d24726" />
                <text x="5.500" y="12.500" textAnchor="middle" fontSize="10" fontWeight="700" fill="#fff" fontFamily={FONT}>P</text>
              </svg>
            </QuickSlot>
            <QuickSlot $w={15} $gap={7}>
              <svg width="15" height="15" viewBox="0 0 15 15">
                <path d="M0 0H12L15 3V15H0Z" fill="#7a4f9a" />
                <rect x="3.500" y="2" width="7" height="4" fill="#fff" />
                <rect x="3" y="9" width="9" height="6" fill="#fff" />
                <rect x="8" y="10" width="2" height="4" fill="#7a4f9a" />
              </svg>
            </QuickSlot>
            <QuickSlot $w={15} $gap={9}>
              <svg width="15" height="14" viewBox="0 0 15 14" fill="none" stroke="#3c6e93" strokeWidth="2">
                <path d="M1.500 5H9C15 5 15 13 8 13" />
                <path d="M5.500 1L1.500 5L5.500 9" />
              </svg>
            </QuickSlot>
            <Caret />
            <QuickSlot $w={14} $gap={9}>
              <svg width="14" height="14" viewBox="0 0 14 14" fill="none" stroke="#a9a9a9" strokeWidth="2">
                <path d="M10.500 2.500A5.800 5.800 0 1 0 13 7" />
                <path d="M6.500 1H11.500V6" strokeWidth="1.500" />
              </svg>
            </QuickSlot>
            <QuickSlot $w={18} $gap={9}>
              <svg width="18" height="18" viewBox="0 0 18 18" fill="none" stroke="#666">
                <path d="M0 1.500H17M3 1.500V11.500H14V1.500M8.500 11.500V16M5 16.500H12" />
                <circle cx="10.500" cy="8" r="4.500" fill="#fff" stroke="#4a8c8c" />
                <path d="M9 5.500V10.500L13 8Z" fill="#4a8c8c" stroke="none" />
              </svg>
            </QuickSlot>
            <QuickSlot $w={8} $gap={4}>
              <svg width="7" height="7" viewBox="0 0 7 7" fill="#666">
                <rect width="7" height="1" />
                <path d="M0 3H7L3.500 7Z" />
              </svg>
            </QuickSlot>
          </QuickAccess>
          <Title>202203 포스팅용 완성본 - PowerPoint</Title>
          <WindowButtons>
            <WindowButton>
              <svg width="10" height="12" viewBox="0 0 10 12" fill="none" stroke="#666" strokeWidth="2">
                <path d="M1.500 4C1.500 .5 8.500 .5 8.500 3.500C8.500 6 5 5.500 5 8" />
                <path d="M5 9.500V12" />
              </svg>
            </WindowButton>
            <WindowButton>
              <svg width="14" height="10" viewBox="0 0 14 10" fill="none" stroke="#666">
                <rect x=".5" y=".5" width="13" height="9" />
                <path d="M.5 2H13.500M7 8.500V4M5 5.500L7 3.500L9 5.500" />
              </svg>
            </WindowButton>
            <WindowButton>
              <svg width="10" height="2" viewBox="0 0 10 2"><rect width="10" height="2" fill="#666" /></svg>
            </WindowButton>
            <WindowButton>
              <svg width="11" height="10" viewBox="0 0 11 10" fill="none" stroke="#666">
                <rect x=".5" y=".5" width="10" height="9" />
                <path d="M0 1.500H11" strokeWidth="2" />
              </svg>
            </WindowButton>
            <WindowButton>
              <svg width="11" height="11" viewBox="0 0 11 11" stroke="#555" strokeWidth="2">
                <path d="M.5.5L10.500 10.500M10.500.5L.5 10.500" />
              </svg>
            </WindowButton>
          </WindowButtons>
        </TitleBar>
        <TabRow>
          {TABS.map(tab => (
            <Tab key={tab.label} $w={tab.w} $active={tab.active} $file={tab.file}>
              {tab.label}
            </Tab>
          ))}
          <Account>
            <Caret />
            <svg width="24" height="24" viewBox="0 0 24 24">
              <rect width="24" height="24" fill="#b0b0b0" />
              <circle cx="12" cy="9" r="5.500" fill="none" stroke="#fff" strokeWidth="2" />
              <path d="M2 24V20C2 16 7 15 9 14H15C17 15 22 16 22 20V24Z" fill="#fff" />
            </svg>
          </Account>
        </TabRow>
      </Header>

      <Ribbon>
        {GROUPS.map((group, i) => (
          <Group key={i} $w={group.w} $pad={group.pad}>
            <GroupButtons>
              {group.tools.map(tool => <Tool key={tool.label.join("")} {...tool} />)}
            </GroupButtons>
            {group.name && <GroupLabel $pad={group.pad}>{group.name}</GroupLabel>}
          </Group>
        ))}
        <Collapse width="9" height="6" viewBox="0 0 9 6" fill="none" stroke="#666" strokeWidth="1.500">
          <path d="M.5 5L4.500 1L8.500 5" />
        </Collapse>
      </Ribbon>

      <Body>
        <ThumbRail>
          <svg width="6" height="8" viewBox="0 0 6 8" fill="none" stroke="#666" strokeWidth="1.500">
            <path d="M1 .5L5 4L1 7.500" />
          </svg>
          <RailText>축소판 그림</RailText>
        </ThumbRail>
        <Canvas>
          <Slide>
            <SlideInner />
          </Slide>
          <Annotation $top={12}>직사각형 4개 병합</Annotation>
          <Annotation $top={61}>※두께가 달라서 '액자' 도형을 쓰지 못했어요</Annotation>
        </Canvas>
        <ScrollBar>
          <ScrollEnd>
            <svg width="9" height="5" viewBox="0 0 9 5"><path d="M4.500 0L9 5H0Z" fill="#777" /></svg>
          </ScrollEnd>
          <ScrollTrack />
          <ScrollThumb />
          <ScrollEnd>
            <svg width="9" height="5" viewBox="0 0 9 5"><path d="M4.500 5L9 0H0Z" fill="#777" /></svg>
          </ScrollEnd>
          <PageJump $top={4} width="9" height="9" viewBox="0 0 9 9" fill="#777">
            <path d="M4.500 0L9 4H0ZM4.500 3L9 7H0Z" />
            <rect y="8" width="9" height="1" />
          </PageJump>
          <PageJump $top={8} width="9" height="9" viewBox="0 0 9 9" fill="#777">
            <rect width="9" height="1" />
            <path d="M4.500 6L9 2H0ZM4.500 9L9 5H0Z" />
          </PageJump>
        </ScrollBar>
      </Body>

      <StatusBar>
        <StatusText>슬라이드 8/8</StatusText>
        <StatusIcon $gap={20} width="15" height="14" viewBox="0 0 15 14" fill="none" stroke="#fbe9e3">
          <path d="M6.500 1H1V11H6.500M7.500 0V14" />
          <path d="M9.500 2L14 7M14 2L9.500 7" strokeWidth="1.200" />
        </StatusIcon>
        <StatusText $gap={14}>한국어</StatusText>
        <StatusRight>
          <svg width="11" height="13" viewBox="0 0 11 13" fill="#fbe9e3">
            <path d="M5.500 0L8.500 3H2.500Z" />
            <path d="M0 5.500H11M0 8.500H11M0 11.500H11" stroke="#fbe9e3" />
          </svg>
          <StatusText $gap={5}>슬라이드 노트</StatusText>
          <StatusIcon $gap={19} width="14" height="14" viewBox="0 0 14 14">
            <path d="M0 0H14V10H7L4 14V10H0Z" fill="#fff" />
          </StatusIcon>
          <StatusText $gap={4}>메모</StatusText>
          <ViewGroup>
            <ViewButton $active>
              <svg width="14" height="14" viewBox="0 0 14 14" fill="none" stroke="#fff" strokeWidth="1.500">
                <rect x=".75" y=".75" width="12.500" height="12.500" />
                <path d="M.75 9.500H13.250M5 4H9.500V6H5Z" />
              </svg>
            </ViewButton>
            <ViewButton>
              <svg width="14" height="13" viewBox="0 0 14 13" fill="#fff">
                <rect width="6" height="5.500" /><rect x="8" width="6" height="5.500" />
                <rect y="7.500" width="6" height="5.500" /><rect x="8" y="7.500" width="6" height="5.500" />
              </svg>
            </ViewButton>
            <ViewButton>
              <svg width="14" height="13" viewBox="0 0 14 13" fill="none" stroke="#fbe9e3">
                <path d="M7 1.500C5 .5 3 .5 .5 1V11.500C3 11 5 11 7 12.500C9 11 11 11 13.500 11.500V1C11 .5 9 .5 7 1.500ZM7 1.500V12.500M2 4H5.500M2 6.500H5.500M2 9H5.500M8.500 4H12M8.500 6.500H12M8.500 9H12" />
              </svg>
            </ViewButton>
            <ViewButton>
              <svg width="14" height="14" viewBox="0 0 14 14" fill="none" stroke="#fbe9e3">
                <path d="M0 1.500H14M1.500 1.500V8.500H12.500V1.500M7 8.500V13M3.500 13.500H10.500" />
                <rect x="4" y="3.500" width="6" height="2.500" />
              </svg>
            </ViewButton>
          </ViewGroup>
          <ZoomMinus width="7" height="3" viewBox="0 0 7 3"><rect y=".5" width="6" height="2" fill="#fff" /></ZoomMinus>
          <ZoomSlider>
            <ZoomThumb />
            <ZoomTick />
          </ZoomSlider>
          <ZoomPlus width="9" height="9" viewBox="0 0 9 9" fill="#fff">
            <path d="M3.500 0H5.500V3.500H9V5.500H5.500V9H3.500V5.500H0V3.500H3.500Z" />
          </ZoomPlus>
          <StatusText $gap={17}>90 %</StatusText>
          <StatusIcon $gap={13} width="14" height="14" viewBox="0 0 14 14" fill="none" stroke="#fbe9e3">
            <rect x=".5" y=".5" width="13" height="13" />
            <path d="M7 2.500V5M5.500 3.500H8.500M7 9V11.500M5.500 10.500H8.500M2.500 7H5M3.500 5.500V8.500M9 7H11.500M10.500 5.500V8.500" />
          </StatusIcon>
        </StatusRight>
      </StatusBar>

      <ShapeMenu>
        {MENU.map(section => (
          <section key={section.title}>
            <MenuHeading>{section.title}</MenuHeading>
            <ShapeGrid>
              {section.items.split(" ").map((name, i) => (
                <ShapeCell key={i} $selected={section.title === "최근에 사용한 도형" && name === "rect"}>
                  <ShapeIcon name={name} />
                </ShapeCell>
              ))}
            </ShapeGrid>
          </section>
        ))}
        <ResizeGrip width="8" height="8" viewBox="0 0 8 8" fill="#888">
          <rect x="6" width="2" height="2" />
          <rect x="3" y="3" width="2" height="2" />
          <rect x="6" y="3" width="2" height="2" />
          <rect y="6" width="2" height="2" />
          <rect x="3" y="6" width="2" height="2" />
          <rect x="6" y="6" width="2" height="2" />
        </ResizeGrip>
      </ShapeMenu>
    </Window>
  )
}
